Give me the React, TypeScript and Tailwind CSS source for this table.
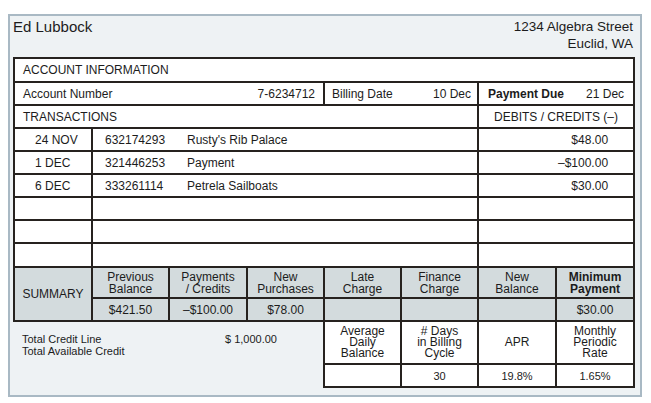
const border = "border-2 border-[#26221f]";

const transactions = [
  { date: "24 NOV", id: "632174293", name: "Rusty's Rib Palace", amount: "$48.00" },
  { date: "1 DEC", id: "321446253", name: "Payment", amount: "–$100.00" },
  { date: "6 DEC", id: "333261114", name: "Petrela Sailboats", amount: "$30.00" },
];

const summaryHeads = [
  ["Previous", "Balance"],
  ["Payments", "/ Credits"],
  ["New", "Purchases"],
  ["Late", "Charge"],
  ["Finance", "Charge"],
  ["New", "Balance"],
];

const summaryValues = ["$421.50", "–$100.00", "$78.00", "", "", ""];

const rateHeads = [
  ["Average", "Daily", "Balance"],
  ["# Days", "in Billing", "Cycle"],
  ["APR"],
  ["Monthly", "Periodic", "Rate"],
];

const rateValues = ["", "30", "19.8%", "1.65%"];

function Cell({
  children,
  className = "",
  colSpan,
  rowSpan,
}: {
  children?: React.ReactNode;
  className?: string;
  colSpan?: number;
  rowSpan?: number;
}) {
  return (
    <td colSpan={colSpan} rowSpan={rowSpan} className={`${border} p-0 ${className}`}>
      {children}
    </td>
  );
}

export default function App() {
  return (
    <div className="min-h-screen bg-white pl-2 pt-[14px] font-['Liberation_Sans',Arial,sans-serif] text-[#1c1c1c]">
      <div className="w-[634px] h-[383px] border-2 border-[#a9b9c4] bg-[#eef2f4] pl-[3px] pr-[7px] pt-[2px]">
        <div className="flex justify-between h-[39px]">
          <div className="text-[15px] leading-[17px]">Ed Lubbock</div>
          <div className="text-[13.5px] leading-[17px] text-right">
            <div>1234 Algebra Street</div>
            <div>Euclid, WA</div>
          </div>
        </div>

        <table className="border-collapse table-fixed w-[620px] text-[12px] leading-[14px]">
          <colgroup>
            <col className="w-[78px]" />
            <col className="w-[77px]" />
            <col className="w-[78px]" />
            <col className="w-[77px]" />
            <col className="w-[77px]" />
            <col className="w-[77px]" />
            <col className="w-[78px]" />
            <col className="w-[78px]" />
          </colgroup>
          <tbody>
            <tr className="h-[24px] bg-white">
              <Cell colSpan={8} className="pl-[8px]">ACCOUNT INFORMATION</Cell>
            </tr>
            <tr className="h-[23px] bg-white">
              <Cell colSpan={4}>
                <div className="flex justify-between pl-[8px] pr-[8px]">
                  <span>Account Number</span>
                  <span>7-6234712</span>
                </div>
              </Cell>
              <Cell colSpan={2}>
                <div className="flex justify-between pl-[7px] pr-[6px]">
                  <span>Billing Date</span>
                  <span>10 Dec</span>
                </div>
              </Cell>
              <Cell colSpan={2}>
                <div className="flex justify-between pl-[9px] pr-[9px]">
                  <span className="font-bold">Payment Due</span>
                  <span>21 Dec</span>
                </div>
              </Cell>
            </tr>
            <tr className="h-[23px] bg-white">
              <Cell colSpan={6} className="pl-[8px]">TRANSACTIONS</Cell>
              <Cell colSpan={2} className="text-center">DEBITS / CREDITS (–)</Cell>
            </tr>
            {transactions.map((t) => (
              <tr key={t.id} className="h-[23px] bg-white">
                <Cell className="pl-[20px]">{t.date}</Cell>
                <Cell colSpan={5}>
                  <div className="flex">
                    <span className="w-[94px] pl-[12px]">{t.id}</span>
                    <span>{t.name}</span>
                  </div>
                </Cell>
                <Cell colSpan={2} className="text-right pr-[25px]">{t.amount}</Cell>
              </tr>
            ))}
            {[23, 23, 24].map((h, i) => (
              <tr key={i} className={`${h === 24 ? "h-[24px]" : "h-[23px]"} bg-white`}>
                <Cell />
                <Cell colSpan={5} />
                <Cell colSpan={2} />
              </tr>
            ))}
            <tr className="h-[31px] bg-[#d3dbdd]">
              <Cell rowSpan={2} className="text-center">SUMMARY</Cell>
              {summaryHeads.map(([a, b], i) => (
                <Cell key={i} className="text-center leading-[12px]">
                  <div>{a}</div>
                  <div>{b}</div>
                </Cell>
              ))}
              <Cell className="text-center leading-[12px] font-bold">
                <div>Minimum</div>
                <div>Payment</div>
              </Cell>
            </tr>
            <tr className="h-[23px] bg-[#d3dbdd]">
              {summaryValues.map((v, i) => (
                <Cell key={i} className="text-center">{v}</Cell>
              ))}
              <Cell className="text-center">$30.00</Cell>
            </tr>
            <tr className="h-[43px]">
              <td colSpan={4} rowSpan={2} className="p-0 align-top">
                <div className="flex pt-[12px] text-[11px] leading-[11.5px]">
                  <div className="w-[211px] pl-[8px]">
                    <div>Total Credit Line</div>
                    <div>Total Available Credit</div>
                  </div>
                  <div>$ 1,000.00</div>
                </div>
              </td>
              {rateHeads.map((lines, i) => (
                <Cell key={i} className="bg-white text-center leading-[11px]">
                  {lines.map((l) => (
                    <div key={l}>{l}</div>
                  ))}
                </Cell>
              ))}
            </tr>
            <tr className="h-[23px]">
              {rateValues.map((v, i) => (
                <Cell key={i} className="bg-white text-center text-[11px]">{v}</Cell>
              ))}
            </tr>
          </tbody>
        </table>
      </div>
    </div>
  );
}
